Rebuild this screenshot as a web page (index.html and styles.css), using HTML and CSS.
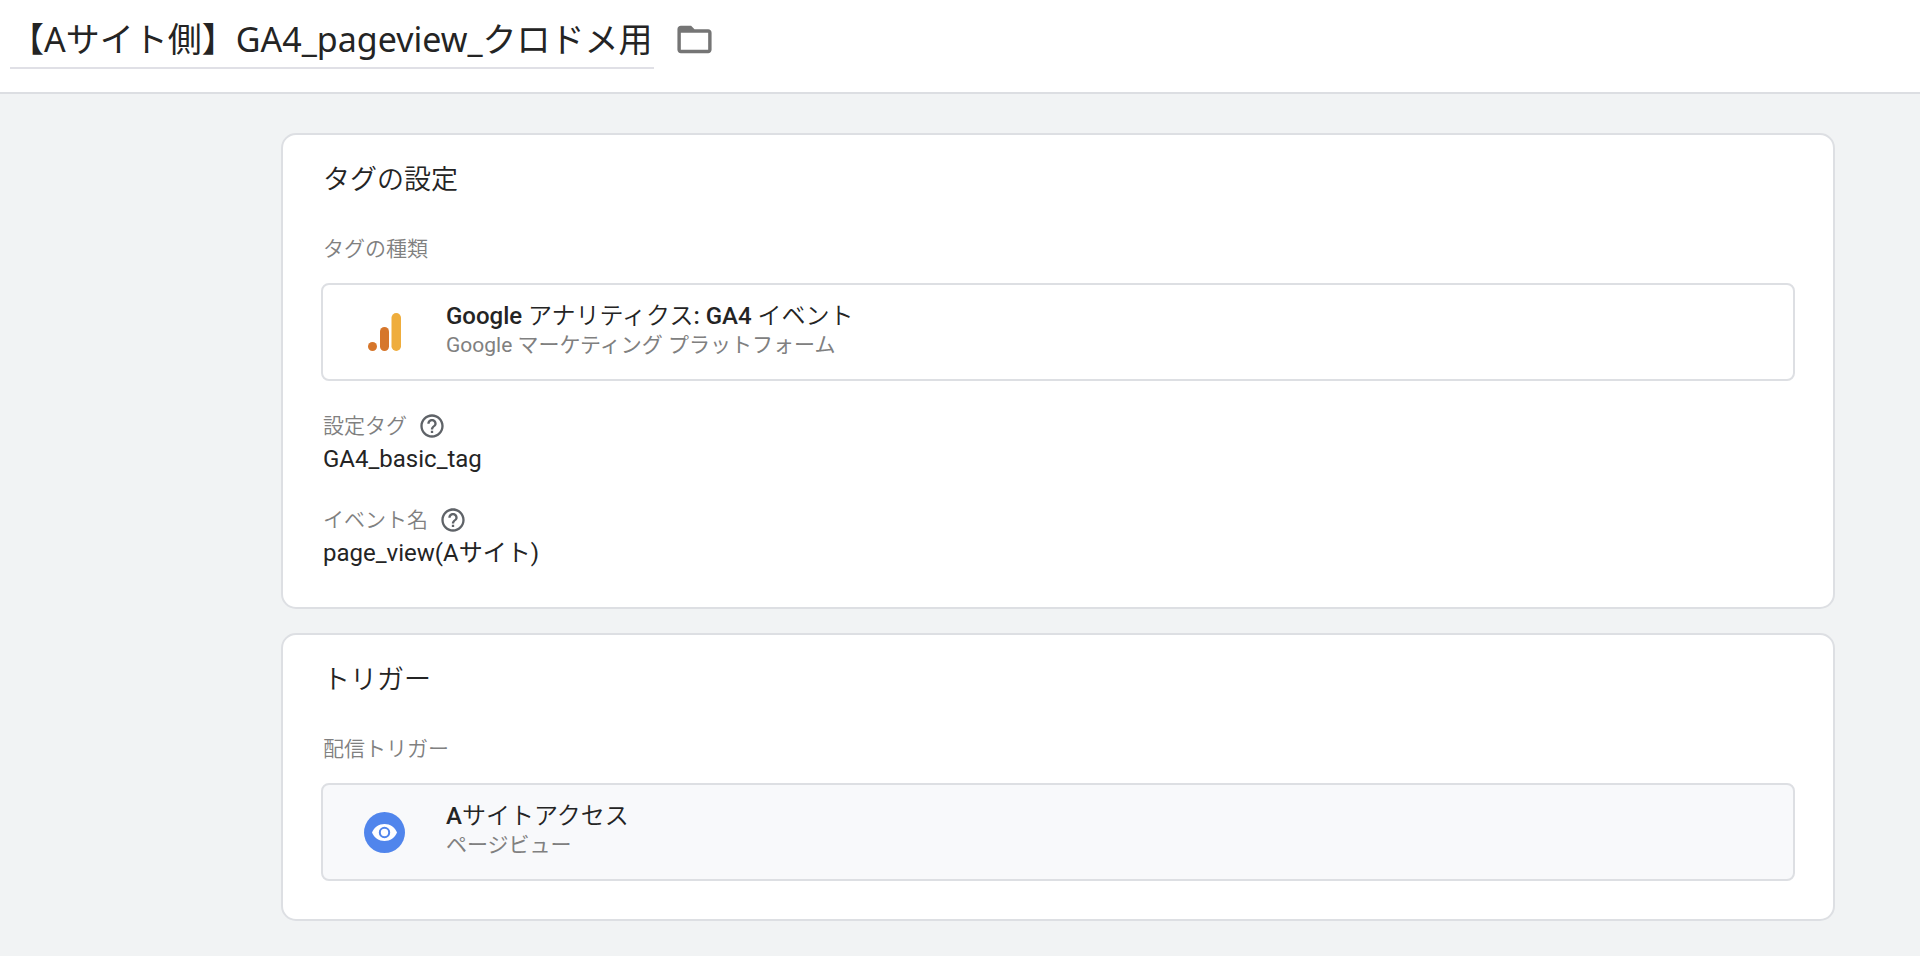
FILE: index.html
```html
<!DOCTYPE html>
<html lang="ja">
<head>
    <meta charset="UTF-8">
    <meta name="viewport" content="width=device-width, initial-scale=1.0">
    <title>【Aサイト側】GA4_pageview_クロドメ用</title>
    <link rel="stylesheet" href="styles.css">
</head>
<body>
    <header class="header">
        <input class="tag-name" type="text" aria-label="タグ名" value="【Aサイト側】GA4_pageview_クロドメ用">
        <button class="icon-button" type="button" aria-label="フォルダ">
            <svg class="folder-icon" viewBox="0 0 24 24"><path d="M20 6h-8l-2-2H4c-1.100 0-1.990.9-1.990 2L2 18c0 1.100.9 2 2 2h16c1.100 0 2-.9 2-2V8c0-1.100-.9-2-2-2zm0 12H4V8h16v10z"/></svg>
        </button>
    </header>

    <main class="content">
        <section class="card">
            <h2>タグの設定</h2>
            <p class="label">タグの種類</p>
            <div class="type-box">
                <div class="type-icon">
                    <svg class="analytics-icon" viewBox="0 0 33 38">
                        <rect x="23.500" y="0" width="9.500" height="38" rx="4.750" fill="#efad3c"/>
                        <rect x="12" y="14" width="9" height="24" rx="4.500" fill="#d6762b"/>
                        <circle cx="4.500" cy="33.500" r="4.500" fill="#d6762b"/>
                    </svg>
                </div>
                <div class="type-text">
                    <p class="type-name"><b>Google</b> アナリティクス<b>: GA4</b> イベント</p>
                    <p class="type-sub">Google マーケティング プラットフォーム</p>
                </div>
            </div>

            <div class="field">
                <div class="field-head">
                    <span class="label">設定タグ</span>
                    <button class="icon-button" type="button" aria-label="設定タグのヘルプ">
                        <svg class="help-icon" viewBox="0 0 24 24"><path d="M11 18h2v-2h-2v2zm1-16C6.480 2 2 6.480 2 12s4.480 10 10 10 10-4.480 10-10S17.520 2 12 2zm0 18c-4.410 0-8-3.590-8-8s3.590-8 8-8 8 3.590 8 8-3.590 8-8 8zm0-14c-2.210 0-4 1.790-4 4h2c0-1.100.9-2 2-2s2 .9 2 2c0 2-3 1.750-3 5h2c0-2.250 3-2.500 3-5 0-2.210-1.790-4-4-4z"/></svg>
                    </button>
                </div>
                <p class="value">GA4_basic_tag</p>
            </div>

            <div class="field">
                <div class="field-head">
                    <span class="label">イベント名</span>
                    <button class="icon-button" type="button" aria-label="イベント名のヘルプ">
                        <svg class="help-icon" viewBox="0 0 24 24"><path d="M11 18h2v-2h-2v2zm1-16C6.480 2 2 6.480 2 12s4.480 10 10 10 10-4.480 10-10S17.520 2 12 2zm0 18c-4.410 0-8-3.590-8-8s3.590-8 8-8 8 3.590 8 8-3.590 8-8 8zm0-14c-2.210 0-4 1.790-4 4h2c0-1.100.9-2 2-2s2 .9 2 2c0 2-3 1.750-3 5h2c0-2.250 3-2.500 3-5 0-2.210-1.790-4-4-4z"/></svg>
                    </button>
                </div>
                <p class="value">page_view(Aサイト)</p>
            </div>
        </section>

        <section class="card">
            <h2>トリガー</h2>
            <p class="label">配信トリガー</p>
            <div class="type-box trigger">
                <div class="type-icon">
                    <svg class="pageview-icon" viewBox="0 0 41 41">
                        <circle cx="20.500" cy="20.500" r="20.500" fill="#5085ec"/>
                        <path d="M8 20.500C10 15.300 14.900 12 20.500 12S31 15.300 33 20.500C31 25.700 26.100 29 20.500 29S10 25.700 8 20.500z" fill="#fff"/>
                        <circle cx="20.500" cy="20.500" r="4.700" fill="#fff" stroke="#5085ec" stroke-width="2"/>
                    </svg>
                </div>
                <div class="type-text">
                    <p class="type-name"><b>A</b>サイトアクセス</p>
                    <p class="type-sub">ページビュー</p>
                </div>
            </div>
        </section>
    </main>
</body>
</html>
```
FILE: styles.css
```css
/* General Styles */
* {
    box-sizing: border-box;
}

body {
    font-family: Roboto, "Noto Sans CJK JP", sans-serif;
    margin: 0;
    background: #f1f3f4;
    color: #242424;
}

h2, p {
    margin: 0;
    font-weight: 400;
}

svg {
    display: block;
}

.icon-button {
    padding: 0;
    border: none;
    background: none;
    cursor: pointer;
}

/* Header */
.header {
    display: flex;
    align-items: center;
    gap: 20px;
    padding: 10px 10px 23px;
    background: #fff;
    border-bottom: 2px solid #dcdee2;
}

.tag-name {
    width: 644px;
    height: 59px;
    padding: 0 0 2px;
    border: none;
    border-bottom: 2px solid #e0e0e6;
    background: none;
    color: inherit;
    font-family: "Noto Sans", "Noto Sans CJK JP", sans-serif;
    font-size: 34px;
}

.folder-icon {
    width: 41px;
    height: 41px;
    fill: #757575;
}

/* Cards */
.content {
    display: flex;
    flex-direction: column;
    gap: 24px;
    padding: 39px 85px 34px 281px;
}

.card {
    padding: 25px 40px 38px;
    background: #fff;
    border: 2px solid #dddfe3;
    border-radius: 15px;
}

.card h2 {
    margin-bottom: 34px;
    font-size: 27px;
    font-weight: 350;
    line-height: 40px;
}

.label {
    color: #808080;
    font-size: 21px;
    font-weight: 350;
    line-height: 30px;
}

.type-box {
    display: flex;
    align-items: center;
    gap: 41px;
    height: 98px;
    margin: 19px -2px 0;
    padding: 0 41px;
    border: 2px solid #dddfe3;
    border-radius: 8px;
}

.trigger {
    background: #f8f9fb;
}

.type-icon {
    display: flex;
    justify-content: center;
    width: 41px;
}

.analytics-icon {
    width: 33px;
    height: 38px;
}

.pageview-icon {
    width: 41px;
    height: 41px;
}

.type-text {
    padding-bottom: 4px;
}

.type-name {
    font-size: 24px;
    font-weight: 350;
    line-height: 30px;
}

.type-name b {
    font-weight: 500;
}

.type-sub {
    color: #808080;
    font-size: 21px;
    line-height: 28px;
}

/* Fields */
.field {
    margin-top: 30px;
}

.field-head {
    display: flex;
    align-items: center;
    gap: 11px;
    margin-bottom: 2px;
}

.help-icon {
    width: 28px;
    height: 28px;
    fill: #5f6368;
}

.value {
    font-size: 24px;
    line-height: 32px;
}
```
